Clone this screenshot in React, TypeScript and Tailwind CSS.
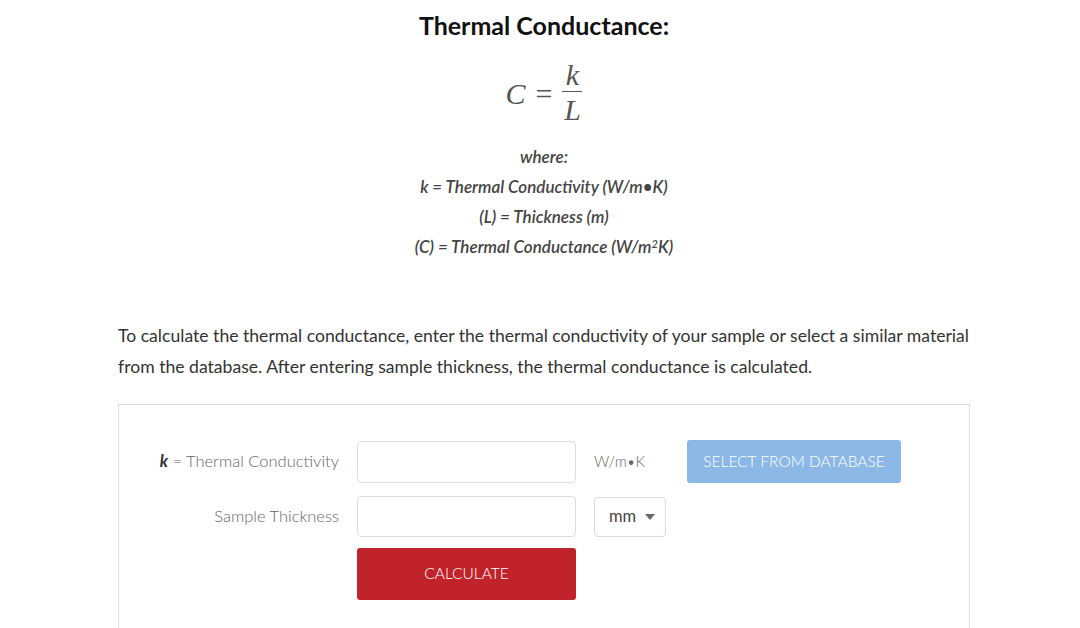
export default function App() {
  return (
    <div className="min-h-screen bg-white font-['Lato','Noto_Sans',sans-serif] text-[#333]">
      <div className="ml-[118px] w-[852px]">
        <h1 className="pt-[8px] text-center text-[25px] font-bold leading-[34px] text-[#111]">
          Thermal Conductance:
        </h1>

        <div className="mt-[17px] flex items-center justify-center font-['Liberation_Serif',serif] text-[30px] italic text-[#555]">
          <span>C</span>
          <span className="mx-[10px] not-italic">=</span>
          <span className="flex flex-col items-center">
            <span className="leading-[32px]">k</span>
            <span className="h-px w-[20px] bg-[#555]" />
            <span className="leading-[36px]">L</span>
          </span>
        </div>

        <div className="mt-[14px] text-center text-[17px] font-semibold italic leading-[30px] text-[#444]">
          <p>where:</p>
          <p>k = Thermal Conductivity (W/m•K)</p>
          <p>(L) = Thickness (m)</p>
          <p>
            (C) = Thermal Conductance (W/m<sup className="text-[11px]">2</sup>K)
          </p>
        </div>

        <p className="mt-[58px] text-[17.6px] leading-[31px] text-[#333]">
          To calculate the thermal conductance, enter the thermal conductivity of your sample or select a similar
          material from the database. After entering sample thickness, the thermal conductance is calculated.
        </p>

        <div className="mt-[22px] h-[260px] border border-[#ddd] pt-[35px]">
          <div className="flex items-center">
            <label className="w-[238px] pr-[18px] text-right text-[16.5px] font-light text-[#666]">
              <b className="font-bold italic text-[#333]">k</b> = Thermal Conductivity
            </label>
            <input className="h-[42px] w-[219px] rounded border border-[#ddd] bg-white" />
            <span className="ml-[18px] w-[93px] text-[15px] font-light text-[#666]">W/m•K</span>
            <button className="h-[43px] w-[214px] rounded-[3px] bg-[#8cb8e6] text-[15.5px] font-light text-white">
              SELECT FROM DATABASE
            </button>
          </div>

          <div className="mt-[13px] flex items-center">
            <label className="w-[238px] pr-[18px] text-right text-[16.5px] font-light text-[#666]">
              Sample Thickness
            </label>
            <input className="h-[41px] w-[219px] rounded border border-[#ddd] bg-white" />
            <div className="ml-[18px] flex h-[40px] w-[72px] items-center justify-between rounded border border-[#ddd] pl-[14px] pr-[10px] text-[16.5px] text-[#444]">
              <span>mm</span>
              <svg width="10" height="6" viewBox="0 0 10 6">
                <path d="M0 0h10L5 6z" fill="#666" />
              </svg>
            </div>
          </div>

          <div className="mt-[11px] pl-[238px]">
            <button className="h-[52px] w-[219px] rounded-[3px] bg-[#c1232b] text-[15.5px] font-light text-white">
              CALCULATE
            </button>
          </div>
        </div>
      </div>
    </div>
  )
}
